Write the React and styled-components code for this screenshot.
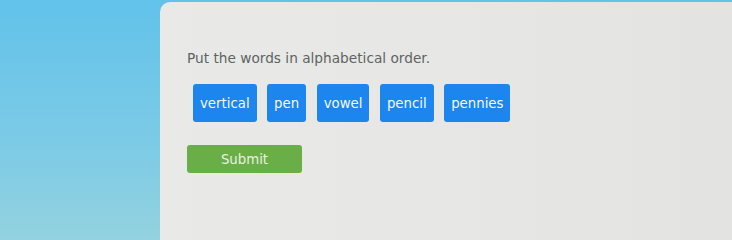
import React from "react";
import styled, { createGlobalStyle } from "styled-components";

const GlobalStyle = createGlobalStyle`
  html, body {
    margin: 0;
    padding: 0;
  }
  body {
    width: 732px;
    height: 240px;
    overflow: hidden;
    font-family: "DejaVu Sans", Verdana, sans-serif;
  }
`;

const Screen = styled.div`
  width: 732px;
  height: 240px;
  display: flex;
  background: linear-gradient(180deg, #62c2ea 0%, #7ccbe6 60%, #93d2df 100%);
`;

const Gutter = styled.div`
  width: 160px;
  flex: none;
`;

const Panel = styled.section`
  flex: 1;
  margin-top: 2px;
  padding: 47px 0 0 27px;
  background: linear-gradient(90deg, #e9eae8 0%, #e6e7e5 60%, #e3e4e2 100%);
  border-top-left-radius: 10px;
  display: flex;
  flex-direction: column;
  align-items: flex-start;
`;

const Prompt = styled.p`
  margin: 0;
  font-size: 13.7px;
  line-height: 18px;
  color: #5d6462;
`;

const WordRow = styled.div`
  display: flex;
  gap: 10.5px;
  margin: 17px 0 0 6px;
`;

const Word = styled.button`
  border: none;
  border-radius: 3px;
  background: #1c86ee;
  color: #f4f8fc;
  font-family: inherit;
  font-size: 13.3px;
  height: 38px;
  padding: 0 7px;
  cursor: pointer;
`;

const Submit = styled.button`
  margin-top: 23px;
  width: 115px;
  height: 28px;
  border: none;
  border-radius: 3px;
  background: #6aae47;
  color: #e8f1e2;
  font-family: inherit;
  font-size: 13.3px;
  cursor: pointer;
`;

const words = ["vertical", "pen", "vowel", "pencil", "pennies"];

export default function App() {
  return (
    <>
      <GlobalStyle />
      <Screen>
        <Gutter />
        <Panel>
          <Prompt>Put the words in alphabetical order.</Prompt>
          <WordRow>
            {words.map((w) => (
              <Word key={w}>{w}</Word>
            ))}
          </WordRow>
          <Submit>Submit</Submit>
        </Panel>
      </Screen>
    </>
  );
}
